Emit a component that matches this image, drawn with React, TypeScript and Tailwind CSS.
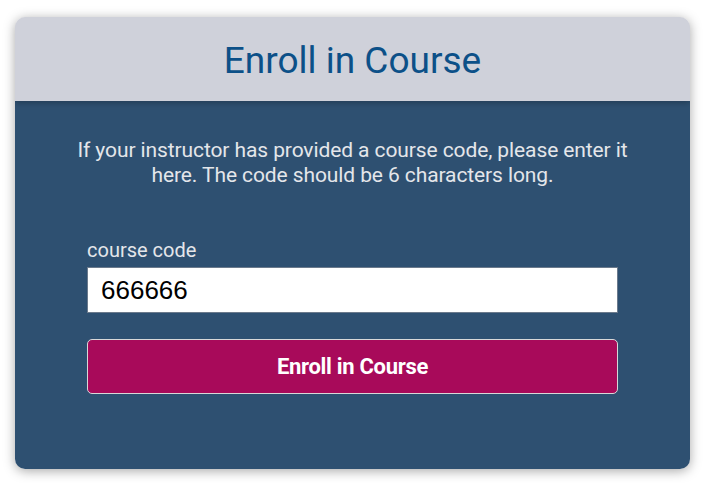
export default function App() {
  return (
    <div className="min-h-screen bg-white pt-[17px] px-[15px] pr-[16px] font-['Roboto',sans-serif]">
      <div className="overflow-hidden rounded-[10px] shadow-[0_2px_12px_rgba(0,0,0,0.35)]">
        <div className="relative z-10 flex h-[84px] items-center justify-center bg-[#cfd1da] pt-[3px] shadow-[0_2px_6px_rgba(0,0,0,0.25)]">
          <h1 className="text-[37px] font-normal leading-none text-[#0c5088]">Enroll in Course</h1>
        </div>
        <div className="bg-[#2e5071] px-[72px] pb-[75px] pt-[37px]">
          <p className="-mx-4 text-center text-[21px] leading-[25px] tracking-[-0.1px] text-[#e4e6ea]">
            If your instructor has provided a course code, please enter it here. The code should be 6 characters long.
          </p>
          <label className="mt-[50px] block text-[20px] leading-[24px] text-[#e4e6ea]">course code</label>
          <input
            readOnly
            value="666666"
            className="mt-[5px] block h-[46px] w-full border border-[#6b7a8c] bg-white px-[13px] font-['Liberation_Sans',sans-serif] text-[26px] text-black outline-none"
          />
          <button className="mt-[26px] flex h-[55px] w-full items-center justify-center rounded-[5px] border border-[#d8d8d8] bg-[#a80a5a] text-[22px] font-bold tracking-[-0.3px] text-white">
            Enroll in Course
          </button>
        </div>
      </div>
    </div>
  )
}
